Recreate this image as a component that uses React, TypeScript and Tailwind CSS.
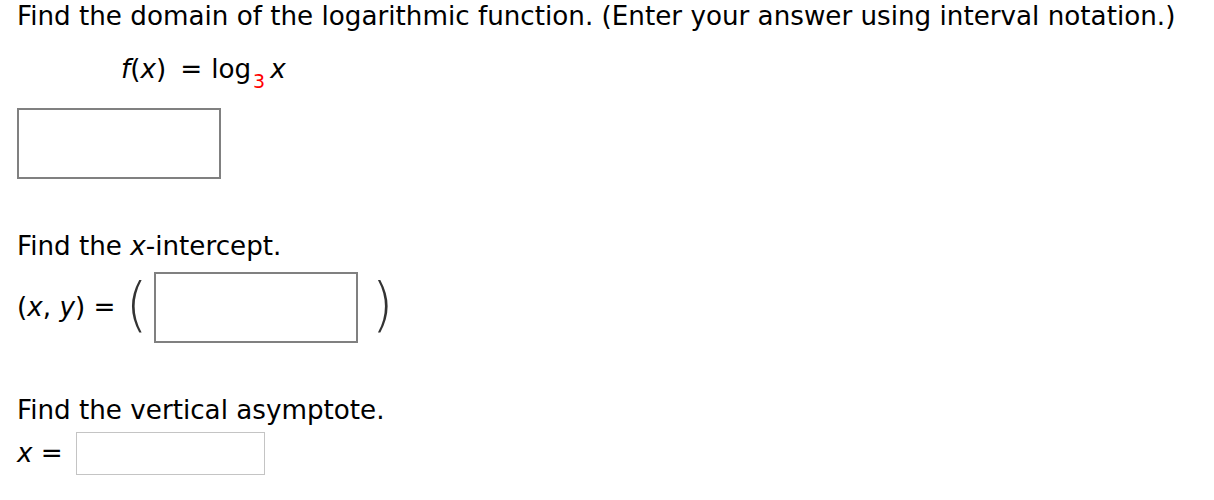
const Paren = ({ side }: { side: "(" | ")" }) => (
  <span className="inline-block scale-x-[1.6] scale-y-[1.75] text-[34px] font-light leading-none text-[#333]">
    {side}
  </span>
);

const App = () => {
  return (
    <div className="min-h-[500px] w-[1214px] bg-white px-[17px] pt-[1px] font-['DejaVu_Sans',Verdana,sans-serif] text-[26.2px] text-black">
      <p className="leading-[30px]">
        Find the domain of the logarithmic function. (Enter your answer using interval notation.)
      </p>

      <div className="mt-[23px] flex items-baseline pl-[104px] leading-[30px]">
        <span>
          <i>f</i>(<i>x</i>)
        </span>
        <span className="ml-[14px]">=</span>
        <span className="ml-[9px]">log</span>
        <span className="relative top-[10px] ml-[2px] text-[19px] text-[#ff0000]">3</span>
        <i className="ml-[5px]">x</i>
      </div>

      <div className="mt-[22px] h-[71px] w-[204px] border-2 border-[#808080]" />

      <p className="mt-[52px] leading-[30px]">
        Find the <i>x</i>-intercept.
      </p>

      <div className="mt-[11px] flex h-[71px] items-center">
        <span>
          (<i>x</i>, <i>y</i>) =
        </span>
        <span className="ml-[15px]">
          <Paren side="(" />
        </span>
        <div className="ml-[10px] h-[71px] w-[204px] border-2 border-[#808080]" />
        <span className="ml-[18px]">
          <Paren side=")" />
        </span>
      </div>

      <p className="mt-[52px] leading-[30px]">Find the vertical asymptote.</p>

      <div className="mt-[7px] flex h-[43px] items-center">
        <span>
          <i>x</i> =
        </span>
        <div className="ml-[13px] h-[43px] w-[189px] border border-[#c4c4c4]" />
      </div>
    </div>
  );
};

export default App;
